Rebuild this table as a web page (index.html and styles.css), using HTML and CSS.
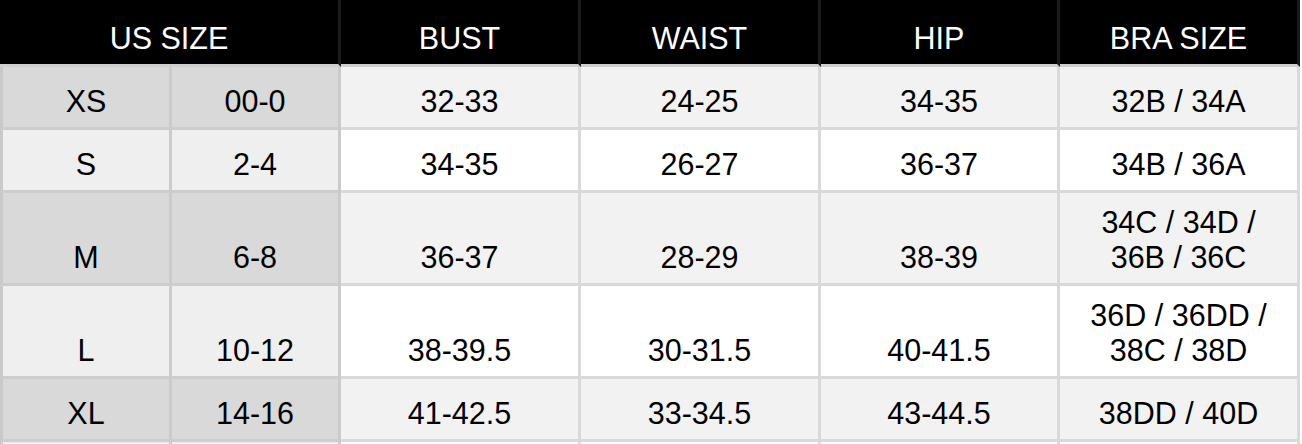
FILE: index.html
```html
<!DOCTYPE html>
<html lang="en">
<head>
<meta charset="utf-8">
<title>Size Chart</title>
<link rel="stylesheet" href="styles.css">
</head>
<body>
<table class="size-chart">
  <colgroup>
    <col class="c-size">
    <col class="c-num">
    <col class="c-meas">
    <col class="c-meas">
    <col class="c-hip">
    <col class="c-meas">
  </colgroup>
  <thead>
    <tr>
      <th colspan="2" class="first">US SIZE</th>
      <th>BUST</th>
      <th>WAIST</th>
      <th>HIP</th>
      <th>BRA SIZE</th>
    </tr>
  </thead>
  <tbody>
    <tr class="dark">
      <td class="first key">XS</td><td class="key">00-0</td>
      <td>32-33</td><td>24-25</td><td>34-35</td><td>32B / 34A</td>
    </tr>
    <tr class="light">
      <td class="first key">S</td><td class="key">2-4</td>
      <td>34-35</td><td>26-27</td><td>36-37</td><td>34B / 36A</td>
    </tr>
    <tr class="dark tall">
      <td class="first key">M</td><td class="key">6-8</td>
      <td>36-37</td><td>28-29</td><td>38-39</td><td>34C / 34D /<br>36B / 36C</td>
    </tr>
    <tr class="light tall">
      <td class="first key">L</td><td class="key">10-12</td>
      <td>38-39.5</td><td>30-31.5</td><td>40-41.5</td><td>36D / 36DD /<br>38C / 38D</td>
    </tr>
    <tr class="dark">
      <td class="first key">XL</td><td class="key">14-16</td>
      <td>41-42.5</td><td>33-34.5</td><td>43-44.5</td><td>38DD / 40D</td>
    </tr>
    <tr class="light">
      <td class="first key"></td><td class="key"></td>
      <td></td><td></td><td></td><td></td>
    </tr>
  </tbody>
</table>
</body>
</html>
```

FILE: styles.css
```css
html, body {
  margin: 0;
  padding: 0;
  background: #ffffff;
}

.size-chart {
  border-collapse: separate;
  border-spacing: 0;
  table-layout: fixed;
  width: 1300px;
  font-family: "Liberation Sans", Arial, Helvetica, sans-serif;
  font-size: 30.5px;
  line-height: normal;
  color: #000;
}

.c-size { width: 172px; }
.c-num { width: 169px; }
.c-meas { width: 240px; }
.c-hip { width: 239px; }

.size-chart th,
.size-chart td {
  box-sizing: border-box;
  padding: 0 4px 8px;
  text-align: center;
  vertical-align: bottom;
  font-weight: normal;
  border-right: 3px solid #d9d9d9;
  border-bottom: 3px solid #d9d9d9;
}

.size-chart th {
  height: 67px;
  background: #000;
  color: #fff;
  border-right-color: #1a1a1a;
  border-bottom-color: #cfcfcf;
}

.size-chart td {
  height: 63px;
}

.size-chart tr.tall td {
  height: 93px;
}

.size-chart td.first {
  border-left: 3px solid #c9c9c9;
}

.size-chart th.first {
  border-left: 0;
}

.size-chart td.key {
  border-right-color: #cbcbcb;
  border-bottom-color: #cdcdcd;
}

.dark td { background: #f2f2f2; }
.dark td.key { background: #d9d9d9; }

.light td { background: #ffffff; }
.light td.key { background: #efefef; }
```
